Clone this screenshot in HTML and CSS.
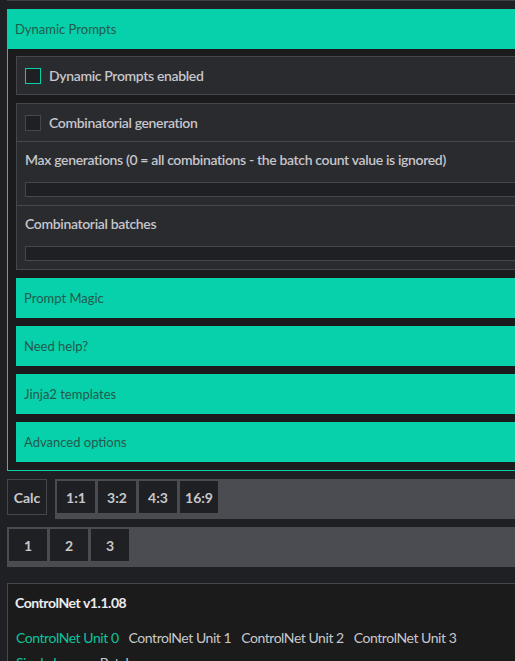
FILE: index.html
```html
<!DOCTYPE html>
<html lang="en">
<head>
<meta charset="utf-8">
<title>Dynamic Prompts</title>
<link rel="stylesheet" href="styles.css">
</head>
<body>
<div class="page">
  <div class="prev-edge"></div>

  <section class="accordion">
    <div class="acc-head">Dynamic Prompts</div>
    <div class="acc-body">
      <div class="box check-box">
        <span class="checkbox checked"></span>
        <span class="label">Dynamic Prompts enabled</span>
      </div>

      <div class="box group">
        <div class="check-row">
          <span class="checkbox"></span>
          <span class="label">Combinatorial generation</span>
        </div>
        <div class="field">
          <div class="label">Max generations (0 = all combinations - the batch count value is ignored)</div>
          <div class="input"></div>
        </div>
        <div class="field">
          <div class="label">Combinatorial batches</div>
          <div class="input"></div>
        </div>
      </div>

      <div class="sub-acc">Prompt Magic</div>
      <div class="sub-acc">Need help?</div>
      <div class="sub-acc">Jinja2 templates</div>
      <div class="sub-acc">Advanced options</div>
    </div>
  </section>

  <div class="ratio-row">
    <button class="calc">Calc</button>
    <div class="btn-bar">
      <button class="btn">1:1</button>
      <button class="btn">3:2</button>
      <button class="btn">4:3</button>
      <button class="btn">16:9</button>
    </div>
  </div>

  <div class="btn-bar">
    <button class="btn">1</button>
    <button class="btn">2</button>
    <button class="btn">3</button>
  </div>

  <section class="cn-panel">
    <div class="cn-title">ControlNet v1.1.08</div>
    <div class="tabs">
      <span class="tab active">ControlNet Unit 0</span>
      <span class="tab">ControlNet Unit 1</span>
      <span class="tab">ControlNet Unit 2</span>
      <span class="tab">ControlNet Unit 3</span>
    </div>
    <div class="tabs sub-tabs">
      <span class="tab active">Single Image</span>
      <span class="tab">Batch</span>
    </div>
  </section>
</div>
</body>
</html>
```

FILE: styles.css
```css
html, body {
  margin: 0;
  padding: 0;
  background: #1f2023;
  overflow: hidden;
  font-family: "Lato", "Liberation Sans", sans-serif;
  font-size: 14px;
  color: #c8c8cc;
}

.page {
  width: 620px;
  padding-left: 7px;
  box-sizing: border-box;
}

.prev-edge {
  height: 1px;
  background: #3f4045;
}

/* Outer accordion */
.accordion {
  margin-top: 8px;
  border: 1px solid #06d1aa;
  background: #1b1b1d;
}

.acc-head {
  height: 40px;
  margin: -1px -1px 0 -1px;
  padding: 0 8px;
  background: #06d1aa;
  color: #23594e;
  font-size: 13px;
  display: flex;
  align-items: center;
}

.acc-body {
  padding: 7px 8px 8px 8px;
  display: flex;
  flex-direction: column;
  gap: 8px;
}

.box {
  border: 1px solid #46474c;
  background: #2a2b2f;
}

.check-box {
  height: 37px;
  display: flex;
  align-items: center;
  gap: 8px;
  padding-left: 8px;
}

.checkbox {
  width: 14px;
  height: 14px;
  border: 1px solid #46474c;
  background: #1f2023;
  flex: none;
}

.checkbox.checked {
  border-color: #06d1aa;
}

.label {
  font-weight: 600;
  color: #c6c6cb;
  line-height: 20px;
  letter-spacing: -0.35px;
}

.check-row {
  height: 37px;
  display: flex;
  align-items: center;
  gap: 8px;
  padding-left: 8px;
  border-bottom: 1px solid #46474c;
}

.field {
  padding: 8px 0 8px 8px;
}

.field + .field {
  border-top: 1px solid #46474c;
}

.field .label {
  margin-bottom: 12px;
}

.input {
  height: 13px;
  border: 1px solid #46474c;
  background: #1f2023;
}

.sub-acc {
  height: 40px;
  background: #06d1aa;
  color: #23594e;
  font-size: 13px;
  padding-left: 8px;
  display: flex;
  align-items: center;
}

/* Button rows */
.ratio-row {
  margin-top: 8px;
  display: flex;
  align-items: flex-start;
  gap: 8px;
}

.calc {
  width: 40px;
  height: 36px;
  border: 1px solid #46474c;
  background: #1f2023;
  color: #c8c8cc;
  font-family: inherit;
  font-size: 14px;
  font-weight: 700;
  padding: 0;
  flex: none;
}

.btn-bar {
  flex: 1;
  height: 40px;
  box-sizing: border-box;
  background: #4a4c51;
  padding: 2px;
  display: flex;
  align-items: flex-start;
  gap: 3px;
}

.page > .btn-bar {
  margin-top: 8px;
}

.btn {
  width: 38px;
  height: 32px;
  border: none;
  background: #1f2023;
  color: #c8c8cc;
  font-family: inherit;
  font-size: 14px;
  font-weight: 700;
  padding: 0;
}

/* ControlNet panel */
.cn-panel {
  margin-top: 16px;
  border: 1px solid #46474c;
  background: #1b1b1b;
  padding: 9px 8px 0 7px;
  height: 120px;
}

.cn-title {
  font-weight: 700;
  color: #ececef;
  line-height: 20px;
  letter-spacing: -0.45px;
}

.tabs {
  margin-top: 15px;
  display: flex;
  gap: 10px;
  padding-left: 1px;
  line-height: 20px;
  letter-spacing: -0.45px;
}

.tab {
  color: #c8c8cc;
}

.tab.active {
  color: #0cc39e;
}

.sub-tabs {
  margin-top: 5px;
  gap: 12px;
}
```
